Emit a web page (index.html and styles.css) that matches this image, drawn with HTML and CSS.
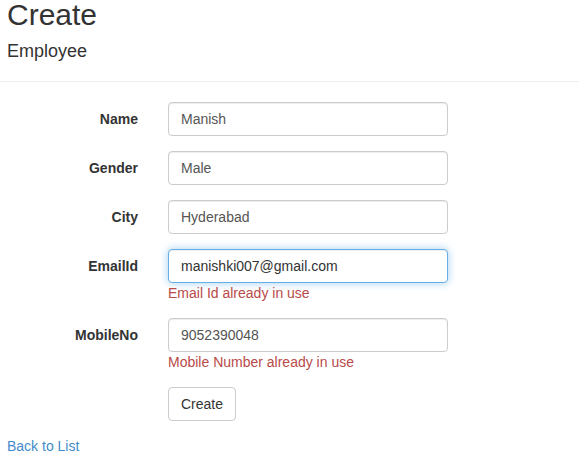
FILE: index.html
```html
<!DOCTYPE html>
<html>
<head>
<meta charset="utf-8">
<link rel="stylesheet" href="styles.css">
</head>
<body>
<div class="page">
  <h2 class="title">Create</h2>
  <form class="form">
    <h4 class="subtitle">Employee</h4>
    <hr class="rule">
    <div class="group">
      <label class="label">Name</label>
      <div class="field"><input class="input" value="Manish"></div>
    </div>
    <div class="group">
      <label class="label">Gender</label>
      <div class="field"><input class="input" value="Male"></div>
    </div>
    <div class="group">
      <label class="label">City</label>
      <div class="field"><input class="input" value="Hyderabad"></div>
    </div>
    <div class="group">
      <label class="label">EmailId</label>
      <div class="field"><input class="input input-focus input-dark" value="manishki007@gmail.com"><span class="error">Email Id already in use</span></div>
    </div>
    <div class="group">
      <label class="label">MobileNo</label>
      <div class="field"><input class="input" value="9052390048"><span class="error">Mobile Number already in use</span></div>
    </div>
    <div class="group">
      <div class="label"></div>
      <div class="field"><button type="button" class="btn">Create</button></div>
    </div>
  </form>
  <div class="back"><a class="link" href="#">Back to List</a></div>
</div>
</body>
</html>
```

FILE: styles.css
```css
* { box-sizing: border-box; }
html, body { margin: 0; padding: 0; background: #fff; }
body {
  font-family: "Liberation Sans", Arial, Helvetica, sans-serif;
  font-size: 14px;
  line-height: 20px;
  color: #333;
}
.page { padding: 0 0 0 7px; }
.title {
  font-size: 30px;
  font-weight: 500;
  line-height: 29px;
  margin: 0 0 12px;
}
.subtitle {
  font-size: 18px;
  font-weight: 500;
  line-height: 20px;
  margin: 10px 0 20px;
}
.rule {
  border: 0;
  border-top: 1px solid #eee;
  margin: 0 0 20px -7px;
  height: 0;
}
.group {
  display: flex;
  margin-bottom: 15px;
}
.label {
  width: 131px;
  text-align: right;
  font-weight: bold;
  padding-top: 7px;
  flex: none;
}
.field {
  margin-left: 30px;
  width: 280px;
}
.input {
  display: block;
  width: 280px;
  height: 34px;
  padding: 6px 12px;
  font-family: inherit;
  font-size: 14px;
  line-height: 20px;
  color: #555;
  background: #fff;
  border: 1px solid #ccc;
  border-radius: 4px;
  box-shadow: inset 0 1px 1px rgba(0,0,0,.075);
  outline: none;
}
.input-focus {
  border-color: #66afe9;
  box-shadow: inset 0 1px 1px rgba(0,0,0,.075), 0 0 8px rgba(102,175,233,.6);
}
.input-dark { color: #333; }
.error { color: #b94a48; }
.btn {
  height: 34px;
  padding: 6px 12px;
  font-family: inherit;
  font-size: 14px;
  line-height: 20px;
  color: #333;
  background: #fff;
  border: 1px solid #ccc;
  border-radius: 4px;
}
.back { line-height: 20px; }
.link { color: #428bca; text-decoration: none; }
```
